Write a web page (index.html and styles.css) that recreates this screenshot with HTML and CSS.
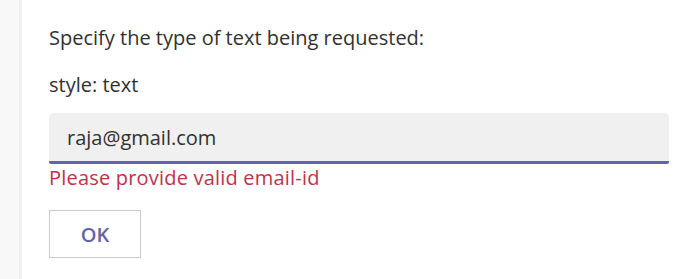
FILE: index.html
```html
<!DOCTYPE html>
<html>
<head>
    <meta charset="utf-8" />
    <title>Input text</title>
    <link rel="stylesheet" href="styles.css">
</head>
<body>
    <div class="page">
        <div class="side-rail"></div>
        <div class="task-body">
            <p class="prompt">Specify the type of text being requested:</p>
            <p class="prompt">style: text</p>
            <div class="field">
                <input class="text-input" type="text" value="raja@gmail.com" />
            </div>
            <div class="error-msg">Please provide valid email-id</div>
            <button class="ok-button">OK</button>
        </div>
    </div>
</body>
</html>
```

FILE: styles.css
```css
body {
    margin: 0px;
    background-color: white;
    color: rgb(50, 49, 48);
    font-family: "Open Sans", "Noto Sans", sans-serif;
}

.page {
    display: flex;
    min-height: 279px;
}

.side-rail {
    width: 19px;
    background-color: rgb(248, 248, 248);
    border-right: 3px solid rgb(240, 240, 240);
}

.task-body {
    flex: 1;
    padding: 26px 26px 0 27px;
}

.prompt {
    margin: 0 0 23px 0;
    font-size: 20px;
    line-height: 24px;
}

.field {
    margin-top: -7px;
}

.text-input {
    box-sizing: border-box;
    width: 620px;
    height: 51px;
    padding: 0 18px;
    border: none;
    border-bottom: 3px solid rgb(98, 100, 167);
    border-radius: 5px 5px 2px 2px;
    background-color: rgb(240, 240, 240);
    color: rgb(50, 49, 48);
    font-family: inherit;
    font-size: 20px;
    outline: none;
}

.error-msg {
    margin-top: 2px;
    color: rgb(190, 50, 75);
    font-size: 20px;
    line-height: 24px;
    letter-spacing: 0.2px;
}

.ok-button {
    display: block;
    margin-top: 20px;
    width: 92px;
    height: 48px;
    padding: 0;
    background-color: white;
    border: 1px solid rgb(200, 200, 220);
    color: rgb(98, 100, 167);
    font-family: inherit;
    font-size: 20px;
    font-weight: 600;
}
```
